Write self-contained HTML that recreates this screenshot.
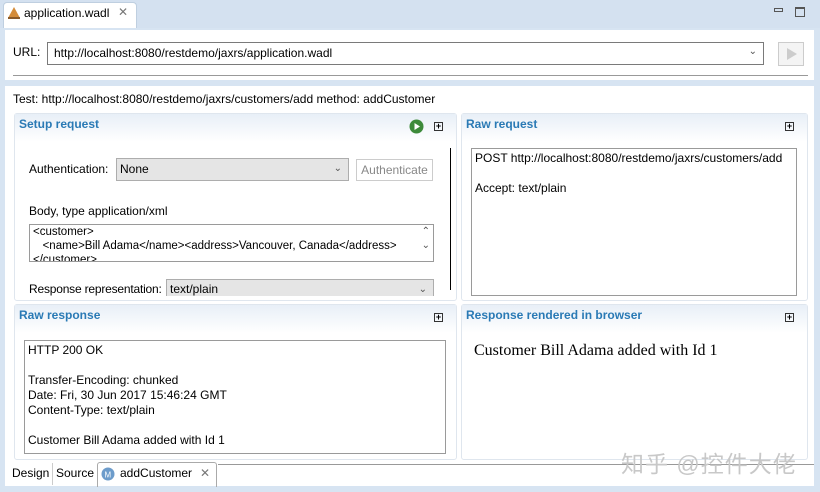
<!DOCTYPE html>
<html><head><style>
*{margin:0;padding:0;box-sizing:border-box}
body{width:820px;height:492px;background:#d7e4f2;font-family:"Segoe UI","Liberation Sans","Noto Sans CJK SC",sans-serif;font-size:12px;color:#000;position:relative;overflow:hidden}
.a{position:absolute}
.sec{position:absolute;border:1px solid #dfe6ee;border-radius:3px;background:#fff}
.hd{position:absolute;left:0;right:0;top:0;height:28px;background:linear-gradient(#e8eff7,#fff)}
.tt{position:absolute;left:4px;top:3px;color:#2a7ab5;font-weight:bold;font-size:12px}
.plus{position:absolute;width:9px;height:9px;border:1px solid #333;font-size:9px;line-height:7px;text-align:center;font-weight:bold}
.box{position:absolute;border:1px solid #9a9a9a;background:#fff;padding:2px 3px;line-height:15px}
.combo{position:absolute;background:#e5e5e5;border:1px solid #adadad;padding:2px 3px;line-height:16px}
.chev{position:absolute;right:6px;top:2px;color:#555;font-size:10px}
</style></head><body>
<div class="a" style="left:0;top:0;width:820px;height:28px;background:#d4e1f0"></div>
<div class="a" style="left:3px;top:2px;width:134px;height:26px;background:#fff;border:1px solid #bfcfe0;border-bottom:none;border-radius:4px 4px 0 0"></div>
<svg class="a" style="left:7px;top:7px" width="14" height="12"><polygon points="7,0 13,11 1,11" fill="#d48c3a"/><rect x="1" y="10" width="12" height="2" fill="#8a5a2a"/></svg>
<div class="a" style="left:24px;top:6px">application.wadl</div>
<div class="a" style="left:118px;top:5px;color:#777;font-size:12px">✕</div>
<div class="a" style="left:774px;top:8px;width:9px;height:4px;border:1px solid #555"></div>
<div class="a" style="left:795px;top:7px;width:10px;height:10px;border:1px solid #555;border-top-width:2px"></div>
<div class="a" style="left:5px;top:30px;width:809px;height:50px;background:#fff"></div>
<div class="a" style="left:13px;top:45px">URL:</div>
<div class="a" style="left:47px;top:42px;width:717px;height:23px;border:1px solid #7a7a7a;background:#fff;padding:3px 6px">http://localhost:8080/restdemo/jaxrs/application.wadl<span class="chev" style="top:3px">&#8964;</span></div>
<div class="a" style="left:778px;top:42px;width:26px;height:24px;border:1px solid #ccc;background:#f4f4f4"><svg width="24" height="22"><polygon points="8,5 18,11 8,17" fill="#ccc"/></svg></div>
<div class="a" style="left:13px;top:75px;width:795px;height:1px;background:#999"></div>
<div class="a" style="left:5px;top:86px;width:809px;height:400px;background:#fff"></div>
<div class="a" style="left:13px;top:92px">Test: http://localhost:8080/restdemo/jaxrs/customers/add method: addCustomer</div>

<div class="sec" style="left:14px;top:113px;width:443px;height:188px"><div class="hd"></div><div class="tt">Setup request</div>
<svg class="a" style="left:394px;top:5px" width="15" height="15"><circle cx="7.5" cy="7.5" r="7" fill="#3d8a3a"/><polygon points="5.5,4 11,7.5 5.5,11" fill="#fff"/></svg>
<div class="plus" style="left:419px;top:8px">+</div></div>
<div class="sec" style="left:461px;top:113px;width:347px;height:188px"><div class="hd"></div><div class="tt">Raw request</div><div class="plus" style="left:323px;top:8px">+</div></div>

<div class="a" style="left:29px;top:162px">Authentication:</div>
<div class="combo" style="left:116px;top:158px;width:233px;height:23px">None<span class="chev">&#8964;</span></div>
<div class="a" style="left:356px;top:159px;width:77px;height:22px;border:1px solid #ccc;color:#888;text-align:center;line-height:20px">Authenticate</div>
<div class="a" style="left:29px;top:204px">Body, type application/xml</div>
<div class="box" style="left:29px;top:224px;width:405px;height:38px;padding:0 3px;line-height:14px;overflow:hidden;font-size:11.5px">&lt;customer&gt;<br>&nbsp;&nbsp;&nbsp;&lt;name&gt;Bill Adama&lt;/name&gt;&lt;address&gt;Vancouver, Canada&lt;/address&gt;<br>&lt;/customer&gt;<span class="a" style="right:3px;top:0;color:#555;font-size:10px;line-height:14px;background:#fff">&#8963;<br>&#8964;</span></div>
<div class="a" style="left:29px;top:282px;letter-spacing:-0.2px">Response representation:</div>
<div class="combo" style="left:166px;top:279px;width:268px;height:17px;border-bottom:none;padding-top:1px">text/plain<span class="chev">&#8964;</span></div>
<div class="a" style="left:450px;top:148px;width:1px;height:142px;background:#000"></div>
<div class="box" style="left:471px;top:148px;width:326px;height:148px">POST http://localhost:8080/restdemo/jaxrs/customers/add<br><br>Accept: text/plain</div>

<div class="sec" style="left:14px;top:304px;width:443px;height:156px"><div class="hd"></div><div class="tt">Raw response</div><div class="plus" style="left:419px;top:8px">+</div></div>
<div class="sec" style="left:461px;top:304px;width:347px;height:156px"><div class="hd"></div><div class="tt">Response rendered in browser</div><div class="plus" style="left:323px;top:8px">+</div></div>
<div class="box" style="left:24px;top:340px;width:422px;height:114px">HTTP 200 OK<br><br>Transfer-Encoding: chunked<br>Date: Fri, 30 Jun 2017 15:46:24 GMT<br>Content-Type: text/plain<br><br>Customer Bill Adama added with Id 1</div>
<div class="a" style="left:474px;top:342px;font-family:'Liberation Serif',serif;font-size:16px">Customer Bill Adama added with Id 1</div>

<div class="a" style="left:217px;top:464px;width:597px;height:1px;background:#999"></div>
<div class="a" style="left:6px;top:462px;width:212px;height:24px;background:#fff"></div>
<div class="a" style="left:12px;top:466px">Design</div>
<div class="a" style="left:52px;top:463px;width:1px;height:22px;background:#ccc"></div>
<div class="a" style="left:56px;top:466px">Source</div>
<div class="a" style="left:97px;top:462px;width:120px;height:25px;border:1px solid #aaa;border-bottom:none;border-radius:3px 3px 0 0"></div>
<svg class="a" style="left:101px;top:467px" width="14" height="14"><circle cx="7" cy="7" r="6.5" fill="#6d9ccb"/><text x="3.5" y="10.5" font-size="8" fill="#fff" font-family="Liberation Sans">M</text></svg>
<div class="a" style="left:120px;top:466px">addCustomer</div>
<div class="a" style="left:200px;top:466px;color:#777">✕</div>
<div class="a" style="left:621px;top:445px;font-size:23px;color:#c8c8c8;letter-spacing:1px;font-family:'Liberation Sans','Noto Sans CJK SC',sans-serif">知乎 @控件大佬</div>
</body></html>
